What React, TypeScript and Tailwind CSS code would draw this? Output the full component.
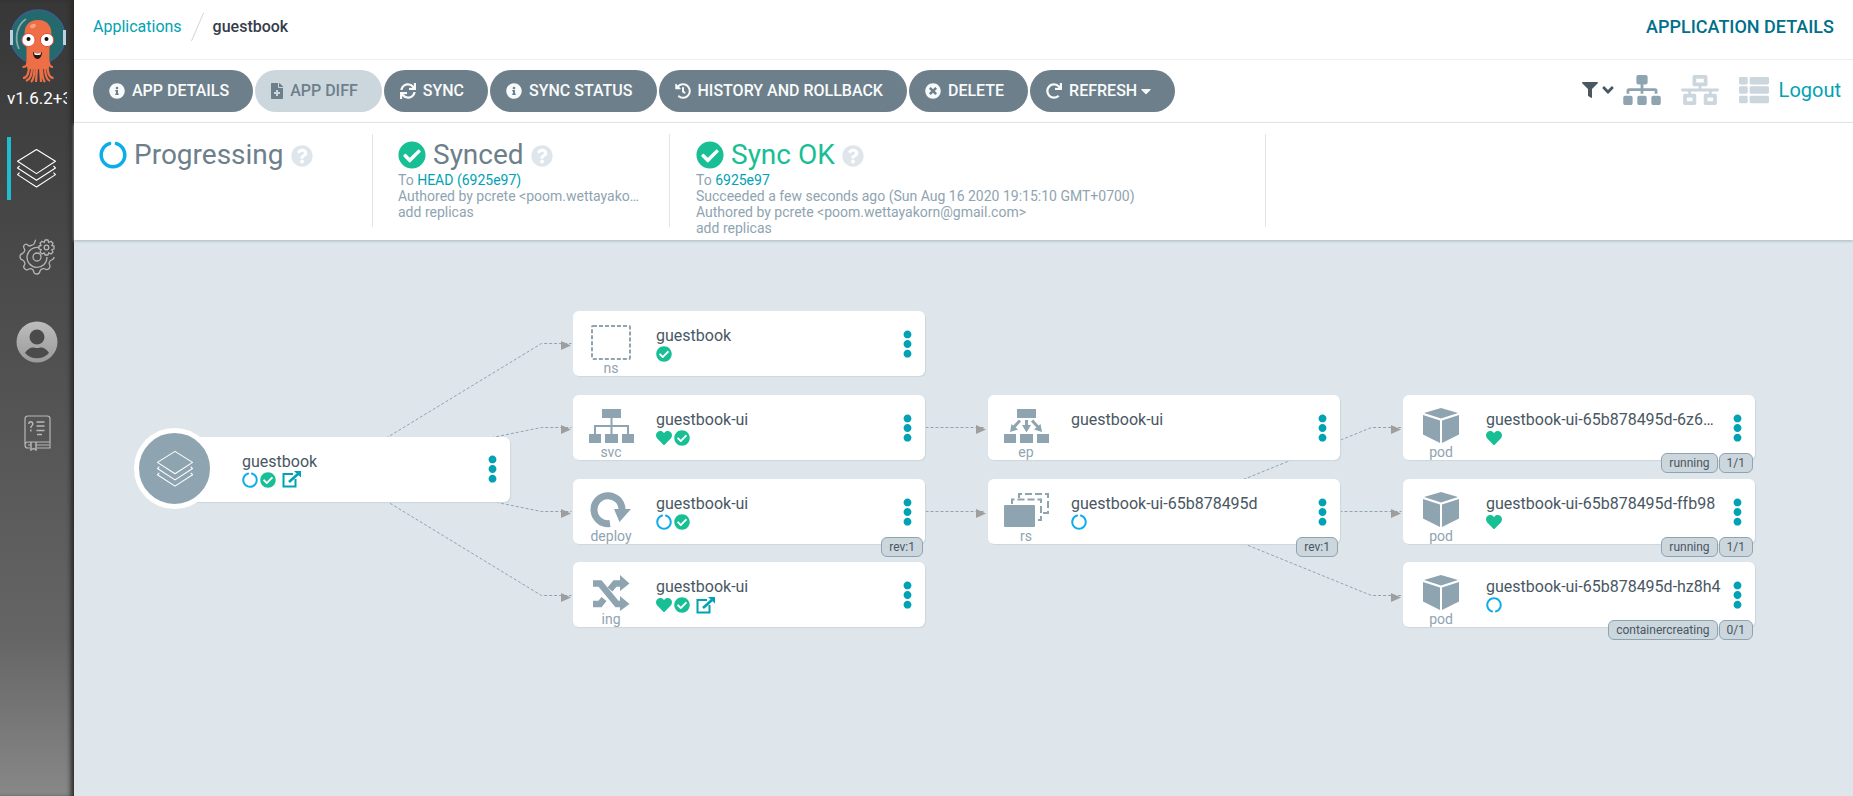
import React from 'react';
import {
  FaAngleDown,
  FaCaretDown,
  FaCheckCircle,
  FaCircleNotch,
  FaEllipsisV,
  FaFileMedical,
  FaFilter,
  FaHeart,
  FaHistory,
  FaInfoCircle,
  FaNetworkWired,
  FaQuestionCircle,
  FaRedo,
  FaSitemap,
  FaSync,
  FaThList,
  FaTimesCircle,
} from 'react-icons/fa';

type Status = 'healthy' | 'synced' | 'progressing' | 'rotated' | 'link';

interface ResourceNode {
  id: string;
  kind: string;
  name: string;
  x: number;
  y: number;
  status: Status[];
  tags?: string[];
}

const NODE_WIDTH = 352;
const NODE_HEIGHT = 65;

// coordinates are relative to the tree canvas
const nodes: ResourceNode[] = [
  { id: 'ns', kind: 'ns', name: 'guestbook', x: 499, y: 71, status: ['synced'] },
  { id: 'svc', kind: 'svc', name: 'guestbook-ui', x: 499, y: 155, status: ['healthy', 'synced'] },
  { id: 'deploy', kind: 'deploy', name: 'guestbook-ui', x: 499, y: 239, status: ['progressing', 'synced'], tags: ['rev:1'] },
  { id: 'ing', kind: 'ing', name: 'guestbook-ui', x: 499, y: 322, status: ['healthy', 'synced', 'link'] },
  { id: 'ep', kind: 'ep', name: 'guestbook-ui', x: 914, y: 155, status: [] },
  { id: 'rs', kind: 'rs', name: 'guestbook-ui-65b878495d', x: 914, y: 239, status: ['progressing'], tags: ['rev:1'] },
  { id: 'pod1', kind: 'pod', name: 'guestbook-ui-65b878495d-6z6mw', x: 1329, y: 155, status: ['healthy'], tags: ['running', '1/1'] },
  { id: 'pod2', kind: 'pod', name: 'guestbook-ui-65b878495d-ffb98', x: 1329, y: 239, status: ['healthy'], tags: ['running', '1/1'] },
  { id: 'pod3', kind: 'pod', name: 'guestbook-ui-65b878495d-hz8h4', x: 1329, y: 322, status: ['rotated'], tags: ['containercreating', '0/1'] },
];

const edges = [
  '260,229 467,103 497,103',
  '260,229 467,187 497,187',
  '260,229 467,271 497,271',
  '260,229 467,355 497,355',
  '851,187 911,187',
  '851,271 911,271',
  '1090,271 1297,187 1327,187',
  '1090,271 1327,271',
  '1090,271 1297,355 1327,355',
];

const arrows = [
  [487, 103], [487, 187], [487, 271], [487, 355],
  [902, 187], [902, 271],
  [1317, 187], [1317, 271], [1317, 355],
];

export default function App() {
  return (
    <div className="flex min-h-screen bg-[#dee6eb] font-['Roboto',sans-serif] text-base text-[#495763]">
      <Sidebar />
      <div className="flex min-w-0 flex-1 flex-col">
        <TopBar />
        <Toolbar />
        <StatusPanel />
        <ResourceTree />
      </div>
    </div>
  );
}

function Sidebar() {
  return (
    <aside className="flex w-[74px] shrink-0 flex-col bg-linear-to-b from-[#373737] via-[#656565] via-80% to-[#888888] shadow-[inset_-5px_0_5px_-2px_#2b2725]">
      <Logo />
      <div className="mx-[7px] h-6 w-[60px] overflow-hidden text-[17px] leading-6 whitespace-nowrap text-white">v1.6.2+3d</div>
      <nav className="mt-[27px] flex flex-col">
        <a href="#applications" aria-label="Applications" className="ml-[7px] flex h-[63px] items-center border-l-4 border-[#1fbdd0] pl-[5px]">
          <StackIcon className="h-[41px] w-[41px] text-white" />
        </a>
        <a href="#settings" aria-label="Settings" className="mt-[25px] flex h-[63px] items-center justify-center">
          <GearsIcon />
        </a>
        <a href="#user" aria-label="User info" className="mt-[22px] flex h-[63px] items-center justify-center">
          <UserIcon />
        </a>
        <a href="#help" aria-label="Documentation" className="mt-7 flex h-[63px] items-center justify-center">
          <BookIcon />
        </a>
      </nav>
    </aside>
  );
}

function TopBar() {
  return (
    <header className="flex h-[60px] items-center justify-between border-b border-[#eceff1] bg-white px-[19px] pb-[6px]">
      <div className="flex items-center">
        <a href="#applications" className="text-[#00a2b3]">Applications</a>
        <svg className="mx-[9px] h-7 w-[13px]" viewBox="0 0 13 28" stroke="#ccd6dd" fill="none">
          <path d="M12.500 0L.5 28" />
        </svg>
        <span className="font-medium text-[#363c4a]">guestbook</span>
      </div>
      <h1 className="text-lg font-medium text-[#006f8a]">APPLICATION DETAILS</h1>
    </header>
  );
}

function ToolButton({ icon, children, disabled }: { icon: React.ReactNode; children: React.ReactNode; disabled?: boolean }) {
  return (
    <button
      disabled={disabled}
      className={`flex h-[42px] items-center gap-[7px] rounded-full pr-6 pl-4 font-medium whitespace-nowrap ${disabled ? 'bg-[#ccd6dd] text-[#6d7f8b]' : 'bg-[#6d7f8b] text-[#f8fbfb]'}`}
    >
      {icon}
      {children}
    </button>
  );
}

function Toolbar() {
  return (
    <div className="flex h-[63px] items-center justify-between border-b border-[#eceff1] bg-white pr-3 pl-[19px]">
      <div className="flex gap-[2px]">
        <ToolButton icon={<FaInfoCircle />}>APP DETAILS</ToolButton>
        <ToolButton icon={<FaFileMedical className="w-3" />} disabled>APP DIFF</ToolButton>
        <ToolButton icon={<FaSync />}>SYNC</ToolButton>
        <ToolButton icon={<FaInfoCircle />}>SYNC STATUS</ToolButton>
        <ToolButton icon={<FaHistory />}>HISTORY AND ROLLBACK</ToolButton>
        <ToolButton icon={<FaTimesCircle />}>DELETE</ToolButton>
        <ToolButton icon={<FaRedo />}>
          <span className="flex items-center gap-1">REFRESH <FaCaretDown className="w-[10px]" /></span>
        </ToolButton>
      </div>
      <div className="flex items-center pb-[2px]">
        <button aria-label="Filter" className="flex items-center gap-[2px] text-[#495763]">
          <FaFilter className="h-4 w-4" />
          <FaAngleDown className="h-[18px] w-4" />
        </button>
        <button aria-label="Tree view" className="ml-[7px] text-[#8fa4b1]"><FaSitemap className="h-[30px] w-[38px]" /></button>
        <button aria-label="Network view" className="ml-5 text-[#ccd6dd]"><FaNetworkWired className="h-[30px] w-[38px]" /></button>
        <button aria-label="List view" className="ml-5 text-[#ccd6dd]"><FaThList className="h-[30px] w-[30px]" /></button>
        <a href="#logout" className="ml-[10px] text-xl text-[#00a2b3]">Logout</a>
      </div>
    </div>
  );
}

function PanelTitle({ icon, children }: { icon: React.ReactNode; children: React.ReactNode }) {
  return (
    <h2 className="flex h-[38px] items-center gap-[7px] pt-1 text-[28px]">
      {icon}
      {children}
      <FaQuestionCircle className="mt-[2px] h-[22px] w-[22px] text-[#dee6eb]" />
    </h2>
  );
}

function StatusPanel() {
  return (
    <section className="relative flex h-[117px] bg-white pt-[11px] text-sm leading-4 text-[#8fa4b1] shadow-[0_1px_3px_#a9b8c1]">
      <div className="h-[93px] w-[299px] border-r border-[#dee6eb] pl-[25px]">
        <div className="text-[#6d7f8b]">
          <PanelTitle icon={<FaCircleNotch className="text-[#0dadea]" />}>Progressing</PanelTitle>
        </div>
      </div>
      <div className="h-[93px] w-[297px] border-r border-[#dee6eb] pr-[29px] pl-[25px]">
        <div className="text-[#6d7f8b]">
          <PanelTitle icon={<FaCheckCircle className="text-[#18be94]" />}>Synced</PanelTitle>
        </div>
        <p>To <a href="#head" className="text-[#00a2b3]">HEAD (6925e97)</a></p>
        <p className="truncate">Authored by pcrete &lt;poom.wettayakorn@gmail.com&gt;</p>
        <p>add replicas</p>
      </div>
      <div className="h-[93px] w-[596px] border-r border-[#dee6eb] pl-[26px]">
        <div className="text-[#18be94]">
          <PanelTitle icon={<FaCheckCircle />}>Sync OK</PanelTitle>
        </div>
        <p>To <a href="#revision" className="text-[#00a2b3]">6925e97</a></p>
        <p>Succeeded a few seconds ago (Sun Aug 16 2020 19:15:10 GMT+0700)</p>
        <p>Authored by pcrete &lt;poom.wettayakorn@gmail.com&gt;</p>
        <p>add replicas</p>
      </div>
    </section>
  );
}

function ResourceTree() {
  return (
    <main className="relative min-h-[420px] flex-1 overflow-hidden">
      <svg className="absolute top-0 left-0 h-[420px] w-[1700px]" fill="none" stroke="#8fa4b1" strokeDasharray="3 2">
        {edges.map(points => <polyline key={points} points={points} transform="translate(.5 .5)" />)}
        {arrows.map(([x, y]) => (
          <path key={`${x}-${y}`} d={`M${x} ${y - 2}l10 4.500l-10 4.500z`} fill="#9e9e9e" stroke="none" />
        ))}
      </svg>
      <RootNode />
      {nodes.map(node => <NodeCard key={node.id} node={node} />)}
    </main>
  );
}

function RootNode() {
  return (
    <div className="absolute top-[188px] left-[60px] flex h-[81px] w-[376px] items-center">
      <div className="absolute top-[9px] right-0 h-[65px] w-[352px] rounded-md bg-white shadow-[1px_1px_1px_#ccd6dd]" />
      <div className="relative flex h-[81px] w-[81px] items-center justify-center rounded-full border-5 border-white bg-[#8fa4b1]">
        <StackIcon className="h-[38px] w-[38px] text-white" />
      </div>
      <div className="relative ml-[27px] flex flex-1 flex-col pt-[2px]">
        <span className="leading-5">guestbook</span>
        <StatusIcons status={['progressing', 'synced', 'link']} />
      </div>
      <MenuButton />
    </div>
  );
}

function MenuButton() {
  return (
    <button aria-label="Resource actions" className="relative mr-3 shrink-0 text-[#00a2b3]">
      <FaEllipsisV className="h-7 w-[11px]" />
    </button>
  );
}

function NodeCard({ node }: { node: ResourceNode }) {
  return (
    <div
      className="absolute flex items-center rounded-md bg-white shadow-[1px_1px_1px_#ccd6dd]"
      style={{ left: node.x, top: node.y, width: NODE_WIDTH, height: NODE_HEIGHT }}
    >
      <div className="flex h-full w-[76px] shrink-0 flex-col items-center pt-[13px] text-sm leading-4 text-[#8fa4b1]">
        <KindIcon kind={node.kind} />
        <span>{node.kind}</span>
      </div>
      <div className="ml-[7px] flex h-full min-w-0 flex-1 flex-col pt-[15px]">
        <span className="mr-2 truncate leading-5">{node.name}</span>
        <StatusIcons status={node.status} />
      </div>
      <MenuButton />
      {node.tags && (
        <div className="absolute right-[2px] -bottom-[13px] flex gap-px text-xs text-[#495763]">
          {node.tags.map(tag => (
            <span key={tag} className="rounded-md border border-[#8fa4b1] bg-[#ccd6dd] px-[7px] leading-[18px]">{tag}</span>
          ))}
        </div>
      )}
    </div>
  );
}

function StatusIcons({ status }: { status: Status[] }) {
  return (
    <div className="flex h-4 items-center gap-[2px]">
      {status.map(s => {
        if (s === 'healthy') return <FaHeart key={s} className="text-[#18be94]" />;
        if (s === 'synced') return <FaCheckCircle key={s} className="text-[#18be94]" />;
        if (s === 'link') return <a key={s} href="#open" aria-label="Open application" className="ml-1 text-[#00a2b3]"><LinkIcon /></a>;
        return <FaCircleNotch key={s} className={s === 'rotated' ? 'rotate-180 text-[#0dadea]' : 'text-[#0dadea]'} />;
      })}
    </div>
  );
}

function LinkIcon() {
  return (
    <svg className="h-[17px] w-[19px]" viewBox="0 0 19 17" fill="none" stroke="currentColor">
      <path d="M11 3H1.500v12.500h12V8" strokeWidth="2" />
      <path d="M7 11L16 3" strokeWidth="2.600" />
      <path d="M12 0h7v6.500z" fill="currentColor" stroke="none" />
    </svg>
  );
}

function KindIcon({ kind }: { kind: string }) {
  return (
    <svg className="h-9 w-[46px] shrink-0" viewBox="0 0 46 36" fill="currentColor">
      {kind === 'ns' && <rect x="4" y="2" width="38" height="33" rx="1" fill="none" stroke="currentColor" strokeWidth="2" strokeDasharray="4 2" />}
      {kind === 'svc' && (
        <>
          <path d="M14 1h19v9H14zM1 26h12v9H1zM17 26h13v9H17zM34 26h12v9H34z" />
          <path d="M23.500 9v18M7 27v-9h33v9" fill="none" stroke="currentColor" strokeWidth="2" />
        </>
      )}
      {kind === 'ep' && (
        <>
          <path d="M14 1h19v9H14zM1 26h12v9H1zM17 26h13v9H17zM34 26h12v9H34z" />
          <path d="M23.500 12v7M17 12.500L11 19M29 12.500l6 6.500" fill="none" stroke="currentColor" strokeWidth="3" />
          <path d="M19 17h9l-4.500 7.500zM7 24l1.500-8 6.500 5.500zM39 24l-1.500-8-6.500 5.500z" />
        </>
      )}
      {kind === 'deploy' && (
        <>
          <path d="M22 31.500A14 14 0 1 1 34 17.500" fill="none" stroke="currentColor" strokeWidth="7" />
          <path d="M26 17h17L31.500 30z" />
        </>
      )}
      {kind === 'ing' && (
        <>
          <path d="M5 8.500h7L29 29h5M5 29h7l4-5M22 14.500l5-6h6" fill="none" stroke="currentColor" strokeWidth="6.500" />
          <path d="M32 0l9.500 8.500L32 16zM32 21l9.500 8-9.500 7z" />
        </>
      )}
      {kind === 'rs' && (
        <>
          <rect x="1" y="13" width="31" height="22" rx="1" />
          <path d="M9 12V7.500h29V28h-4M16 6V2h29v19h-5" fill="none" stroke="currentColor" strokeWidth="2" strokeDasharray="7 3" />
        </>
      )}
      {kind === 'pod' && <path d="M23 0l17 5-17 5.500L6 5zM5 7l17 5.500V35L5 26.500zM24 12.500L41 7v19.500L24 35z" />}
    </svg>
  );
}

function StackIcon({ className }: { className: string }) {
  return (
    <svg className={className} viewBox="0 0 40 40" fill="none" stroke="currentColor" strokeWidth="1.100" strokeLinejoin="round">
      <path d="M20 1.500L38.500 13 20 25 1.500 13z" />
      <path d="M3.500 17.500l-2 2L20 31.500l18.500-12-2-2M3.500 24l-2 2L20 38l18.500-12-2-2" />
    </svg>
  );
}

function GearsIcon() {
  return (
    <svg className="h-9 w-9" viewBox="0 0 36 36" fill="none" stroke="#b5b5b5" strokeWidth="1.300" strokeLinejoin="round">
      <circle cx="18" cy="18" r="4" />
      <path d="M20 8.500A10 10 0 1 0 28 18M17 1c-1 0-1.500 4-2.500 4.500-1.500.5-3 1.500-4.500 1.500C9 6 7.500 4.500 6 5.500S4 8 5.500 10c1 1.500-1 4-2 4.500-2 .5-2.500 1-2.500 3s.5 3 2.500 3.500c1.500.5 3 3.500 2 5-1.500 2-1 2.500.5 4s2.500 1 4 0 4 0 4.500 2c.5 2.500 1 3 3.500 3s2.500-1 3-3 3.500-3 5-2 2.500 1 4-.5 1.500-2 .5-4 .5-4 2-4.500 2.500-1 2.500-3" />
      <circle cx="27.500" cy="8.500" r="2.300" />
      <path d="M26 1h3l.7 2.500L32 2.200l2 2-1.200 2.300L35 7v3l-2.200.7L34 13l-2 2-2.300-1.200L29 16h-3l-.7-2.200L23 15l-2-2 1.200-2.300L20 10V7l2.200-.5L21 4.200l2-2 2.300 1.300z" />
    </svg>
  );
}

function UserIcon() {
  return (
    <svg className="h-[42px] w-[42px]" viewBox="0 0 42 42">
      <defs>
        <linearGradient id="user" x1="0" y1="0" x2="0" y2="1">
          <stop stopColor="#bdbdbd" />
          <stop offset="1" stopColor="#9a9a9a" />
        </linearGradient>
      </defs>
      <circle cx="21" cy="21" r="20.500" fill="url(#user)" />
      <circle cx="21" cy="16" r="7.500" fill="#4b4b4b" />
      <path d="M9 32c2-4 6-6 9-5.500 2 .7 4 .7 6 0 3-.5 7 1.500 9 5.500-6 7-18 7-24 0z" fill="#4b4b4b" />
    </svg>
  );
}

function BookIcon() {
  return (
    <svg className="h-9 w-[27px]" viewBox="0 0 27 36" fill="none" stroke="#b8b8b8" strokeWidth="1.200">
      <path d="M6 33H3.500Q1 33 1 30V4q0-3 3-3h19q3 0 3 2.500V27H4q-3 0-3 3M26 27v6H12M4 30h3M12 30h13" />
      <path d="M7 27v8l2.500-1.500L12 35v-8M12.500 7h8M12.500 11h8M12.500 15.500h8M13 19.500h5M4.800 9c0-3 4-3 4 0 0 2-2 1.500-2 4M6.800 14.500v2" strokeWidth="1.400" />
    </svg>
  );
}

function Logo() {
  return (
    <svg className="mt-[7px] ml-[9px] h-[79px] w-[58px]" viewBox="0 0 58 79">
      <circle cx="29" cy="30" r="27" fill="#24696c" stroke="#38618f" strokeWidth="1.500" />
      <rect x="1" y="23" width="3" height="15" fill="#b8d3e6" />
      <rect x="54" y="23" width="3" height="15" fill="#b8d3e6" />
      <path d="M10 42C5 31 8 18 17 12" fill="none" stroke="#86a9aa" strokeWidth="1.800" />
      <path d="M16 31C14 20 19 13 29 13s15 7 13 18c-2 6-1.500 14-1.500 25l-1 6h-21l-1-6c0-11 .5-19-1.500-25z" fill="#ee6f45" />
      {/* tentacles */}
      <path d="M18.500 55q0 5-5 5M40 55q0 5 4 5M20 58q0 13-6 13M23 60q0 12-6 14M25.500 60q0 12-3.500 15M28 60l-1 15M31 60l1 15M33 60q0 12 3 15M36 60q0 12 5 14M38.500 58q0 13 6 13" fill="none" stroke="#ee6f45" strokeWidth="2.200" />
      <ellipse cx="24" cy="19" rx="3" ry="2" fill="#f6a285" transform="rotate(-25 24 19)" />
      <circle cx="19.500" cy="33" r="6.600" fill="#fff" stroke="#e34e3b" strokeWidth="1" />
      <circle cx="38" cy="33" r="6.600" fill="#fff" stroke="#e34e3b" strokeWidth="1" />
      <circle cx="19.500" cy="32" r="2" fill="#111" />
      <circle cx="37.500" cy="32" r="2" fill="#111" />
      <path d="M24 45q5 3 9 0c0 4-2 7-4.500 7S24 49 24 45z" fill="#231815" />
      <path d="M25 45.500q4 2 7 0l-.5 2q-3 1-6 0z" fill="#fff" />
    </svg>
  );
}
